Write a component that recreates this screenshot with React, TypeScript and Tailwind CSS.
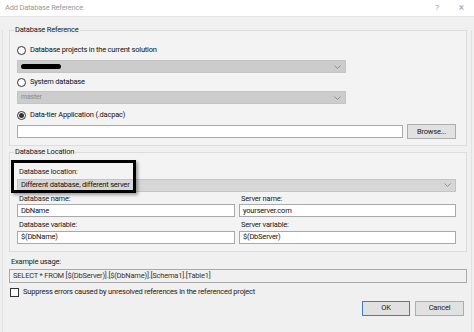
import React from "react";

const font = { fontFamily: 'Roboto, "Noto Sans", sans-serif', letterSpacing: "-0.2px" };

function Radio({ checked, label }: { checked?: boolean; label: string }) {
  return (
    <div className="flex items-center h-[12px] gap-[4px]">
      <div className="w-[9px] h-[9px] rounded-full border border-[#333] bg-white flex items-center justify-center">
        {checked && <div className="w-[5px] h-[5px] rounded-full bg-[#333]" />}
      </div>
      <span className="text-[7.5px] text-[#111] leading-none">{label}</span>
    </div>
  );
}

function Chevron({ color = "#888" }: { color?: string }) {
  return (
    <svg width="7" height="4" viewBox="0 0 7 4" className="shrink-0">
      <path d="M0.5 0.5 L3.5 3.5 L6.5 0.5" fill="none" stroke={color} strokeWidth="0.9" />
    </svg>
  );
}

function Combo({ w, children, bg = "#cccccc" }: { w: string; children?: React.ReactNode; bg?: string }) {
  return (
    <div className={`${w} h-[13px] border border-[#c4c4c4] flex items-center justify-between pl-[3px] pr-[4px]`} style={{ background: bg }}>
      <div className="flex items-center">{children}</div>
      <Chevron />
    </div>
  );
}

function Input({ value, className = "" }: { value?: string; className?: string }) {
  return (
    <div className={`h-[13px] bg-white border border-[#a9a9a9] flex items-center px-[3px] text-[7.5px] leading-none text-[#111] ${className}`}>
      {value}
    </div>
  );
}

function Label({ children, className = "" }: { children: React.ReactNode; className?: string }) {
  return <div className={`text-[7.5px] leading-none text-[#1a1a1a] ${className}`}>{children}</div>;
}

function Button({ children, primary, w }: { children: React.ReactNode; primary?: boolean; w: string }) {
  return (
    <div
      className={`${w} h-[15px] flex items-center justify-center text-[7.5px] leading-none text-[#222] bg-[#e1e1e1] ${
        primary ? "border-[1.5px] border-[#3c7fc4]" : "border border-[#adadad]"
      }`}
    >
      {children}
    </div>
  );
}

export default function App() {
  return (
    <div className="w-[474px] h-[332px] bg-[#f0f0f0] relative overflow-hidden" style={font}>
      {/* title bar */}
      <div className="h-[17px] bg-white flex items-center justify-between pl-[5px] pr-[10px] border-b border-[#e6e6e6]">
        <span className="text-[7.5px] text-[#9a9a9a] leading-none">Add Database Reference</span>
        <div className="flex items-center gap-[20px] text-[#a0a0a0]">
          <span className="text-[8px] leading-none">?</span>
          <span className="text-[10px] leading-none">×</span>
        </div>
      </div>

      <div className="mx-[2px] border-x border-[#e2e2e2] h-[315px] pl-[6px] pr-[6px]">
        {/* Group 1 */}
        <div className="mt-[13px] relative border border-[#dcdcdc] bg-[#f3f3f3] h-[116px] w-[458px] pl-[7px] pt-[13px]">
          <div className="absolute -top-[5px] left-[4px] bg-[#f0f0f0] px-[1px]">
            <Label>Database Reference</Label>
          </div>
          <div className="flex flex-col">
            <Radio label="Database projects in the current solution" />
            <div className="mt-[4px]">
              <Combo w="w-[329px]">
                <div className="w-[40px] h-[5px] rounded-full bg-black" />
              </Combo>
            </div>
            <div className="mt-[3px]">
              <Radio label="System database" />
            </div>
            <div className="mt-[3px]">
              <Combo w="w-[329px]">
                <span className="text-[7px] text-[#8a8a8a] leading-none">master</span>
              </Combo>
            </div>
            <div className="mt-[5px]">
              <Radio checked label="Data-tier Application (.dacpac)" />
            </div>
            <div className="mt-[3px] flex items-center gap-[4px]">
              <Input className="w-[386px]" />
              <Button w="w-[49px]">Browse...</Button>
            </div>
          </div>
        </div>

        {/* Group 2 */}
        <div className="mt-[6px] relative border border-[#dcdcdc] bg-[#f3f3f3] h-[100px] w-[458px] pl-[7px] pt-[13px]">
          <div className="absolute -top-[5px] left-[4px] bg-[#f0f0f0] px-[1px]">
            <Label>Database Location</Label>
          </div>
          <Label className="ml-[2px] mt-[2px]">Database location:</Label>
          <div className="mt-[3px]">
            <div className="w-[439px] h-[13px] bg-[#d6d6d6] border border-[#c4c4c4] flex items-center justify-between pl-[3px] pr-[4px]">
              <span className="text-[7.5px] text-[#111] leading-none">Different database, different server</span>
              <Chevron />
            </div>
          </div>
          <div className="flex gap-[4px] mt-[3px]">
            <div className="w-[218px]">
              <Label className="ml-[2px]">Database name:</Label>
              <Input className="mt-[2px]" value="DbName" />
              <Label className="ml-[2px] mt-[4px]">Database variable:</Label>
              <Input className="mt-[2px]" value="$(DbName)" />
            </div>
            <div className="w-[217px]">
              <Label className="ml-[2px]">Server name:</Label>
              <Input className="mt-[2px]" value="yourserver.com" />
              <Label className="ml-[2px] mt-[4px]">Server variable:</Label>
              <Input className="mt-[2px]" value="$(DbServer)" />
            </div>
          </div>
          {/* highlight box */}
          <div className="absolute left-[1px] top-[7px] w-[125px] h-[33px] border-[3px] border-black shadow-[2px_2px_3px_rgba(0,0,0,0.35)]" />
        </div>

        <Label className="mt-[6px] ml-[2px]">Example usage:</Label>
        <div className="mt-[3px] w-[458px] h-[14px] border border-[#a9a9a9] bg-[#f0f0f0] flex items-center px-[3px] text-[7.5px] leading-none text-[#333]">
          SELECT * FROM [$(DbServer)].[$(DbName)].[Schema1].[Table1]
        </div>
        <div className="mt-[5px] flex items-center gap-[4px] ml-[1px]">
          <div className="w-[9px] h-[9px] border border-[#333] bg-white" />
          <span className="text-[7.5px] leading-none text-[#1a1a1a]">
            Suppress errors caused by unresolved references in the referenced project
          </span>
        </div>
        <div className="mt-[4px] flex justify-end gap-[5px] pr-[1px]">
          <Button primary w="w-[48px]">OK</Button>
          <Button w="w-[49px]">Cancel</Button>
        </div>
      </div>
    </div>
  );
}
